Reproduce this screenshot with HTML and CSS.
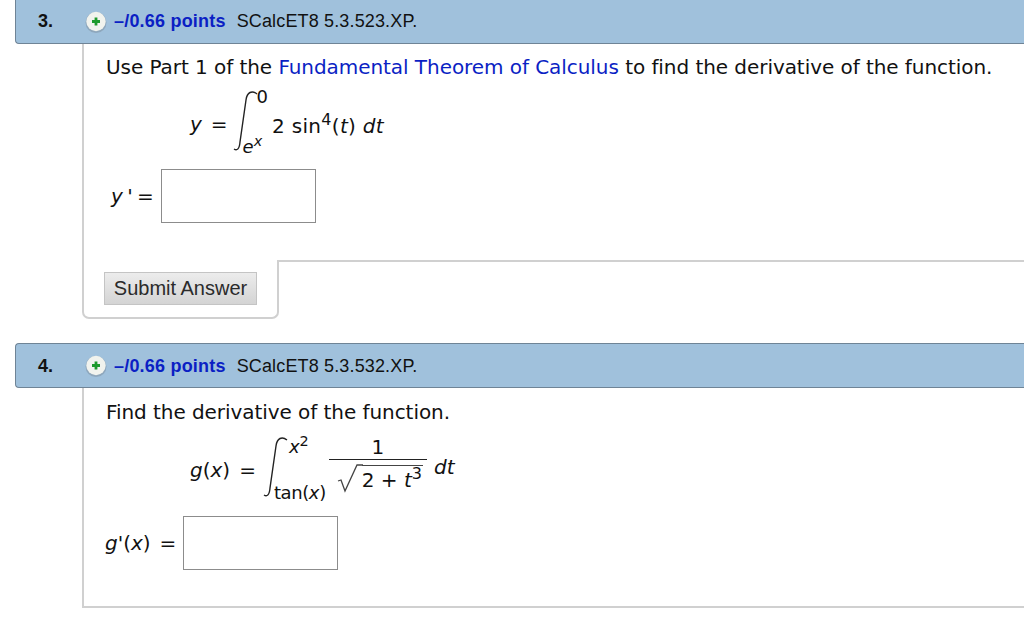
FILE: index.html
```html
<!DOCTYPE html>
<html>
<head>
<meta name="viewport" content="width=device-width, initial-scale=1">
<link rel="stylesheet" href="styles.css">
</head>
<body>

<div class="question first">
    <div class="qhead">
        <b class="num">3.</b>
        <svg class="plus" width="24" height="24" viewBox="0 0 24 24"><circle cx="12" cy="12.5" r="10.5" fill="#7f92a3" opacity="0.55"/><circle cx="12" cy="11.5" r="9.7" fill="#f1f3ee"/><path d="M12 7.5v8M8 11.5h8" stroke="#1c9a2c" stroke-width="2.8"/></svg>
        <b class="points">–/0.66 points</b>
        <span class="code">SCalcET8 5.3.523.XP.</span>
    </div>
    <div class="qbody">
        <p class="prompt">Use Part 1 of the <a href="#">Fundamental Theorem of Calculus</a> to find the derivative of the function.</p>
        <div class="formula f1">
            <i>y</i><span class="eq">=</span>
            <svg class="integral" width="26" height="64" viewBox="0 0 26 64"><path d="M25 4C20 0 15 2 14 10L8 52C7.5 59 5 61 2 59" fill="none" stroke="#222" stroke-width="1.4"/></svg>
            <div class="limits">
                <span>0</span>
                <span class="lower"><i>e<sup>x</sup></i></span>
            </div>
            <span class="integrand">2 sin<sup>4</sup>(<i>t</i>) <i>dt</i></span>
        </div>
        <div class="answer a1">
            <label><i>y</i> ' =</label>
            <input type="text">
        </div>
    </div>
    <div class="actions">
        <div class="submitbox"><button>Submit Answer</button></div>
        <div class="filler"></div>
    </div>
</div>

<div class="question second">
    <div class="qhead">
        <b class="num">4.</b>
        <svg class="plus" width="24" height="24" viewBox="0 0 24 24"><circle cx="12" cy="12.5" r="10.5" fill="#7f92a3" opacity="0.55"/><circle cx="12" cy="11.5" r="9.7" fill="#f1f3ee"/><path d="M12 7.5v8M8 11.5h8" stroke="#1c9a2c" stroke-width="2.8"/></svg>
        <b class="points">–/0.66 points</b>
        <span class="code">SCalcET8 5.3.532.XP.</span>
    </div>
    <div class="qbody last">
        <p class="prompt">Find the derivative of the function.</p>
        <div class="formula f2">
            <span><i>g</i>(<i>x</i>)</span><span class="eq">=</span>
            <svg class="integral" width="26" height="64" viewBox="0 0 26 64"><path d="M25 4C20 0 15 2 14 10L8 52C7.5 59 5 61 2 59" fill="none" stroke="#222" stroke-width="1.4"/></svg>
            <div class="limits">
                <span class="upper"><i>x</i><sup>2</sup></span>
                <span class="lower">tan(<i>x</i>)</span>
            </div>
            <div class="fraction">
                <span class="top">1</span>
                <span class="bottom">
                    <svg width="26" height="30" viewBox="0 0 26 30"><path d="M1 18l3-1 4 11L20 2h6" fill="none" stroke="#444" stroke-width="1.3"/></svg>
                    <span class="radicand">2 + <i>t</i><sup>3</sup></span>
                </span>
            </div>
            <i class="dt">dt</i>
        </div>
        <div class="answer a2">
            <label><i>g</i>'(<i>x</i>) &nbsp;=</label>
            <input type="text">
        </div>
    </div>
</div>

</body>
</html>
```

FILE: styles.css
```css
* {
    box-sizing: border-box;
}

body {
    margin: 0;
    background: #fff;
    color: #111;
    font-family: "DejaVu Sans", Verdana, sans-serif;
    font-size: 20px;
    overflow: hidden;
}

/* Blue question header */
.qhead {
    display: flex;
    align-items: center;
    height: 45px;
    margin-left: 15px;
    padding-left: 22px;
    background: #a0c1dc;
    border: 1px solid #6f8496;
    border-right: none;
    border-radius: 4px 0 0 4px;
    font-family: "Liberation Sans", Arial, sans-serif;
    font-size: 18px;
}

.first .qhead {
    margin-top: -1px;
    border-top-left-radius: 0;
}

.second {
    margin-top: 24px;
}

.second .qhead {
    padding-top: 1px;
}

.num {
    width: 46px;
}

.plus {
    margin-right: 6px;
}

.points {
    color: #0b1fc4;
    letter-spacing: 0.2px;
    margin-right: 11px;
}

.code {
    letter-spacing: 0.15px;
}

/* Question body with the grey line down its left side */
.qbody {
    margin-left: 82px;
    padding: 11px 0 0 22px;
    border-left: 2px solid #d0d0d0;
    height: 216px;
}

.qbody.last {
    height: 220px;
    padding-top: 12px;
    border-bottom: 2px solid #d0d0d0;
}

.prompt {
    margin: 0;
    line-height: 24px;
    letter-spacing: -0.06px;
    white-space: nowrap;
}

.prompt a {
    color: #0b1fc4;
    text-decoration: none;
}

sup {
    font-size: 80%;
    line-height: 0;
}

/* Display maths */
.formula {
    display: flex;
    align-items: center;
    height: 78px;
}

.f1 {
    margin-left: 84px;
    margin-top: 6px;
}

.f2 {
    margin-left: 84px;
    margin-top: 7px;
}

.eq {
    margin-left: 9px;
}

.integral {
    margin-left: 4px;
    margin-top: -4px;
    flex: none;
}

.f2 .integral {
    margin-left: 6px;
}

.limits {
    display: flex;
    flex-direction: column;
    justify-content: space-between;
    height: 70px;
    margin-top: -4px;
    margin-left: -1px;
    font-size: 18px;
    line-height: 20px;
}

.f1 .lower {
    margin-left: -14px;
}

.f2 .lower {
    margin-left: -13px;
    letter-spacing: -0.4px;
}

.upper {
    margin-top: 4px;
    margin-left: 2px;
}

.f1 .integrand {
    margin-left: 4px;
    margin-top: 4px;
    letter-spacing: 0.3px;
}

.fraction {
    display: flex;
    flex-direction: column;
    align-items: center;
    align-self: flex-start;
    margin-left: 3px;
    margin-top: 4px;
}

.top {
    width: 100%;
    text-align: center;
    line-height: 24px;
    border-bottom: 1px solid #222;
}

.bottom {
    display: flex;
    align-items: flex-start;
    padding: 3px 4px 0 8px;
}

.radicand {
    margin-top: 1.5px;
    border-top: 1px solid #444;
    line-height: 28px;
    padding-right: 1px;
    margin-left: -1px;
}

.dt {
    margin-left: 7px;
    margin-top: -6px;
}

/* Answer rows */
.answer {
    display: flex;
    align-items: center;
}

.a1 {
    margin-top: 6px;
    margin-left: 5px;
}

.a2 {
    margin-top: 7px;
    margin-left: -1px;
}

.answer label {
    margin-right: 7px;
    word-spacing: -2px;
}

.answer input {
    width: 155px;
    height: 54px;
    border: 1px solid #8c8c8c;
    background: #fff;
    margin: 0;
}

/* Submit box, open at the top, and the line running on to the right */
.actions {
    display: flex;
    margin-left: 82px;
}

.submitbox {
    width: 197px;
    height: 59px;
    padding: 12px 0 0 20px;
    border: 2px solid #d0d0d0;
    border-top: none;
    border-radius: 0 0 7px 7px;
}

.submitbox button {
    display: block;
    width: 153px;
    height: 33px;
    padding: 0;
    background: linear-gradient(#ececec, #d4d4d4);
    border: 1px solid #c4c4c4;
    border-radius: 0;
    color: #2b2b2b;
    font-family: "Liberation Sans", Arial, sans-serif;
    font-size: 20px;
}

.filler {
    flex: 1;
    border-top: 2px solid #d0d0d0;
}
```
